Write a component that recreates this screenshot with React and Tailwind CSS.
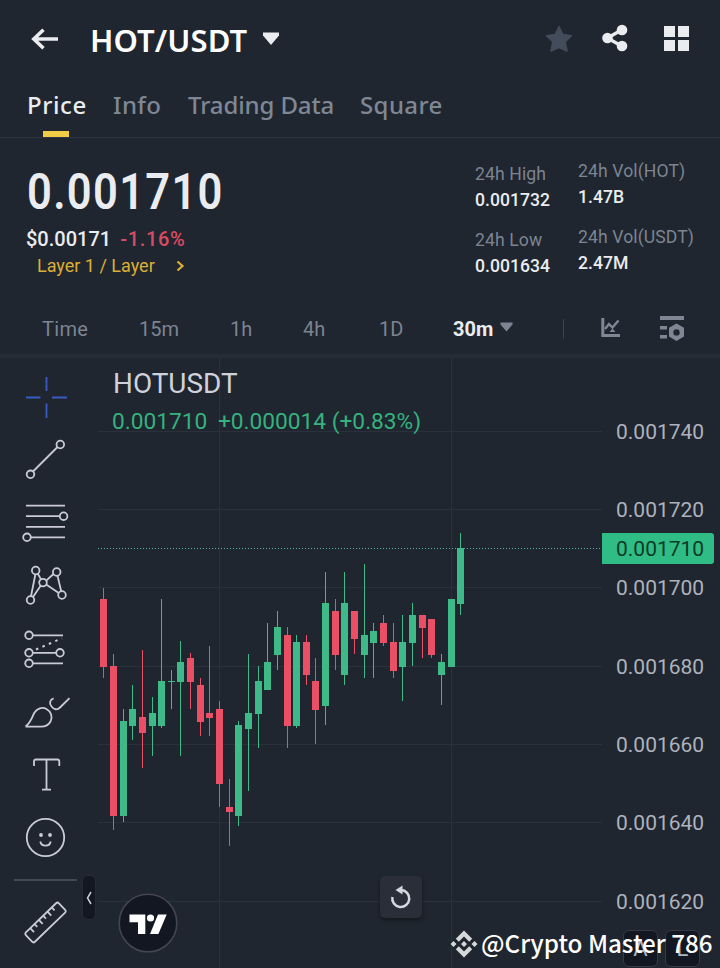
const GREEN = "#3dba87";
const RED = "#ea4f66";

// left edge, body top, body bottom, wick top, wick bottom, up
const candles = [
  [100, 599, 667, 588, 678, 0],
  [110, 666, 816, 654, 830, 0],
  [120, 721, 816, 709, 822, 1],
  [129, 709, 726, 685, 740, 1],
  [139, 717, 733, 650, 768, 0],
  [149, 713, 726, 697, 756, 1],
  [158, 681, 726, 599, 728, 1],
  [168, 681, 682, 670, 709, 1],
  [177, 662, 682, 641, 756, 1],
  [187, 658, 682, 653, 709, 0],
  [197, 685, 722, 678, 736, 0],
  [206, 713, 718, 646, 736, 0],
  [216, 709, 784, 701, 807, 0],
  [226, 807, 812, 779, 846, 0],
  [235, 725, 816, 721, 826, 1],
  [245, 713, 729, 654, 791, 1],
  [255, 681, 714, 666, 748, 1],
  [264, 662, 690, 623, 690, 1],
  [274, 627, 655, 611, 670, 1],
  [284, 635, 726, 627, 748, 0],
  [293, 642, 726, 635, 728, 1],
  [303, 642, 675, 635, 685, 0],
  [312, 681, 710, 658, 744, 0],
  [322, 603, 706, 572, 725, 1],
  [332, 611, 655, 599, 670, 0],
  [341, 603, 675, 572, 685, 1],
  [351, 611, 639, 611, 654, 0],
  [361, 635, 655, 564, 678, 1],
  [370, 631, 643, 623, 678, 1],
  [380, 623, 643, 615, 646, 0],
  [390, 642, 671, 623, 678, 0],
  [399, 642, 667, 615, 701, 1],
  [409, 615, 643, 603, 666, 1],
  [419, 615, 628, 615, 658, 0],
  [428, 619, 655, 619, 658, 0],
  [438, 662, 675, 654, 705, 1],
  [448, 599, 667, 599, 667, 1],
  [457, 548, 604, 533, 615, 1],
];

const levels = [
  ["0.001740", 431],
  ["0.001720", 509],
  ["0.001700", 587],
  ["0.001680", 666],
  ["0.001660", 744],
  ["0.001640", 822],
  ["0.001620", 901],
];

function Tool({ children, color = "#c9ccd6" }) {
  return (
    <svg width="92" height="63" viewBox="0 0 92 63" fill="none" stroke={color} strokeWidth="1.8" className="block shrink-0">
      {children}
    </svg>
  );
}

function Header() {
  return (
    <div className="h-[77px] flex items-center text-[#eaecef]">
      <svg width="28" height="22" viewBox="0 0 28 22" className="ml-[31px]" fill="none" stroke="currentColor" strokeWidth="3.6">
        <path d="M27 11H3M12.500 1.800L2.800 11L12.500 20.200" />
      </svg>
      <h1 className="ml-[31px] mt-[2px] w-[158px] text-[31px] leading-[40px] font-semibold tracking-[0.1px] text-white whitespace-nowrap">HOT/USDT</h1>
      <svg width="18" height="14" viewBox="0 0 18 14" className="ml-[14px]">
        <path d="M1 0.500H17V3.500L9 13L1 3.500Z" fill="currentColor" />
      </svg>

      <svg width="28" height="28" viewBox="0 0 28 28" className="ml-[265px] mt-[1px]">
        <path d="M14 1.500L17.800 9.500L26.500 10.700L20.200 16.800L22 26L14 22.500L6 26L7.800 16.800L1.500 10.700L10.200 9.500Z" fill="#434c5a" stroke="#434c5a" strokeWidth="1.500" strokeLinejoin="round" />
      </svg>
      <svg width="28" height="28" viewBox="0 0 28 28" className="ml-[28px] mb-[1px]" fill="currentColor">
        <path d="M6.500 14L20.500 6M6.500 14L20.500 22" stroke="currentColor" strokeWidth="3.200" />
        <circle cx="6.500" cy="14" r="5.300" />
        <circle cx="21" cy="6" r="5.300" />
        <circle cx="21" cy="22" r="5.300" />
      </svg>
      <div className="ml-[35px] grid grid-cols-2 gap-[3px]">
        <i className="w-[11px] h-[11px] bg-[#eaecef]" />
        <i className="w-[11px] h-[11px] bg-[#eaecef]" />
        <i className="w-[11px] h-[11px] bg-[#eaecef]" />
        <i className="w-[11px] h-[11px] bg-[#eaecef]" />
      </div>
    </div>
  );
}

function Tabs() {
  return (
    <div className="h-[61px] flex border-b border-[#303641] pl-[27px] text-[24px] leading-[30px] font-medium text-[#7f8795] whitespace-nowrap">
      <div className="w-[60px] mr-[26px] pt-[13px] text-[#eaecef] flex flex-col">
        <span className="tracking-[0.6px]">Price</span>
        <i className="mt-[11px] ml-[16px] w-[26px] h-[6px] bg-[#f0cd45] shrink-0" />
      </div>
      <span className="w-[75px] pt-[13px] tracking-[0.4px]">Info</span>
      <span className="w-[172px] pt-[13px] tracking-[-0.1px]">Trading Data</span>
      <span className="pt-[13px] tracking-[0.4px]">Square</span>
    </div>
  );
}

function Stat({ label, value }) {
  return (
    <div className="h-[66px] leading-[26px] text-[17.6px] whitespace-nowrap">
      <div className="tracking-[0.1px] text-[#7c8492]">{label}</div>
      <div className="font-medium text-[#eaecef]">{value}</div>
    </div>
  );
}

function Summary() {
  return (
    <div className="h-[168px] flex font-[Roboto,sans-serif]">
      <div className="w-[475px] pl-[26px] pt-[26px] whitespace-nowrap">
        <div className="origin-left scale-x-[0.87] text-[50px] leading-[56px] font-semibold tracking-[1.5px] ml-px text-[#eaecef]">0.001710</div>
        <div className="mt-[6px] text-[20px] leading-[26px] font-medium text-[#eaecef]">
          <span>$0.00171</span>
          <span className="ml-[9px] tracking-[0.7px] text-[#d84b62]">-1.16%</span>
        </div>
        <div className="ml-[11px] mt-[1px] flex items-center text-[18px] leading-[26px] text-[#dcae35]">
          <span className="w-[139px]">Layer 1 / Layer</span>
          <svg width="9" height="12" viewBox="0 0 9 12" fill="none" stroke="currentColor" strokeWidth="2.200">
            <path d="M1.500 1.500L6.500 6L1.500 10.500" />
          </svg>
        </div>
      </div>
      <div className="w-[103px] pt-[23px]">
        <Stat label="24h High" value="0.001732" />
        <Stat label="24h Low" value="0.001634" />
      </div>
      <div className="pt-[20px]">
        <Stat label="24h Vol(HOT)" value="1.47B" />
        <Stat label="24h Vol(USDT)" value="2.47M" />
      </div>
    </div>
  );
}

function Intervals() {
  return (
    <div className="h-[48px] flex items-center pb-[3px] pl-[42px] font-[Roboto,sans-serif] text-[20px] text-[#7c8492] whitespace-nowrap">
      <span className="w-[97px] tracking-[0.3px]">Time</span>
      <span className="w-[91px]">15m</span>
      <span className="w-[73px]">1h</span>
      <span className="w-[76px]">4h</span>
      <span className="w-[74px]">1D</span>
      <span className="w-[47px] font-bold text-[#eaecef]">30m</span>
      <svg width="13" height="10" viewBox="0 0 13 10" className="mb-[3px]">
        <path d="M0.500 0.500H12.500V2.500L6.500 9.500L0.500 2.500Z" fill="#7c8492" />
      </svg>
      <i className="ml-[50px] w-px h-[20px] bg-[#3a414d]" />
      <svg width="20" height="20" viewBox="0 0 20 20" className="ml-[37px] mb-[2px]" fill="none" stroke="#7f8795">
        <path d="M1.800 0V17.500H19" strokeWidth="3" />
        <path d="M4 11L8 6L11.500 9.500L17.500 2.500" strokeWidth="2.400" />
        <path d="M11.500 10.500L14.500 14H8.500Z" fill="#7f8795" stroke="none" />
      </svg>
      <svg width="25" height="26" viewBox="0 0 25 26" className="ml-[39px] mb-[2px]" fill="#7f8795">
        <path d="M0 1H24V5H0ZM0 11H7V14.500H0ZM0 20H7V23.500H0Z" />
        <path fillRule="evenodd" d="M16.500 8.500L24 12.800V21.500L16.500 26L9 21.500V12.800ZM16.500 14.200A3.200 3.200 0 1 0 16.500 20.600A3.200 3.200 0 1 0 16.500 14.200Z" />
      </svg>
    </div>
  );
}

function Toolbar() {
  return (
    <div className="w-[92px] pt-[8px] shrink-0">
      <Tool color="#3a5bc4">
        <path d="M26 31.500H40.500M52 31.500H67M46.500 11V25M46.500 37.500V52" />
      </Tool>
      <Tool>
        <path d="M33 42.500L57.500 18" />
        <circle cx="60.300" cy="15.500" r="3.800" />
        <circle cx="30.500" cy="45.300" r="3.800" />
      </Tool>
      <Tool>
        <path d="M26 13.600H65M26 24.200H59.800M26 34.900H65M30.800 45.300H65" />
        <circle cx="63.600" cy="24.200" r="3.800" />
        <circle cx="27" cy="45.300" r="3.800" />
      </Tool>
      <Tool>
        <path d="M35.400 19.300L31 41.200M37.800 18.700L41 24.400M46.200 25.600L53.500 19M57.500 20.800L61.200 36.200M46.200 29.600L58.800 38M40.800 30.600L33 42" />
        <circle cx="35.700" cy="15.500" r="3.800" />
        <circle cx="56.700" cy="17" r="3.800" />
        <circle cx="43" cy="27.600" r="3.800" />
        <circle cx="30.500" cy="45" r="3.800" />
        <circle cx="62" cy="40" r="3.800" />
      </Tool>
      <Tool>
        <path d="M32.800 17.300H63M32.800 34.800H56.200M32.800 45.300H63" />
        <path d="M36 31.500L62 20.300" strokeDasharray="2.500 4.500" strokeWidth="2" />
        <circle cx="29" cy="17.300" r="3.800" />
        <circle cx="29" cy="34.800" r="3.800" />
        <circle cx="60" cy="34.800" r="3.800" />
        <circle cx="29" cy="45.300" r="3.800" />
      </Tool>
      <Tool>
        <path d="M25.500 45.500C31 41.500 32 36 34.500 31.500C37 27.500 42 25.500 46.500 28C51 30.500 53 36 50.500 40.500C48.500 44.500 45 45.700 41 45.700H25.500" />
        <path d="M53.600 17.400C50 18.500 48.800 22.500 51.500 25.500C54 28.500 57 29.500 60 26.500L69.500 17.200" />
      </Tool>
      <Tool>
        <path d="M34 22V17.500Q34 15.500 36 15.500H57.300Q59.300 15.500 59.300 17.500V22M46.500 15.500V45.600M42 45.600H51" />
      </Tool>
      <Tool>
        <circle cx="45.500" cy="30.500" r="18.700" />
        <path d="M40.300 34.500Q41 38.600 45.500 38.600Q50 38.600 50.700 34.500" />
        <circle cx="41" cy="28" r="1.900" fill="#c9ccd6" stroke="none" />
        <circle cx="50" cy="28" r="1.900" fill="#c9ccd6" stroke="none" />
      </Tool>
      <i className="block ml-[14px] mt-[9px] w-[63px] h-[2px] bg-[#434955]" />
      <div className="mt-[10px]">
        <Tool>
          <g transform="translate(45.500 31.500) rotate(-44)">
            <rect x="-23" y="-6.500" width="46" height="13" rx="2" />
            <path d="M-15 -6.500V-1M-9 -6.500V-2.500M-3 -6.500V-1M3 -6.500V-2.500M9 -6.500V-1M15 -6.500V-2.500" />
          </g>
        </Tool>
      </div>
    </div>
  );
}

function Chart() {
  return (
    <svg width="628" height="610" viewBox="92 358 628 610" className="block shrink-0 font-[Roboto,sans-serif]">
      <g fill="#2a313b">
        <rect x="219" y="358" width="1" height="610" />
        <rect x="451" y="358" width="1" height="610" />
        {levels.map(([label, y]) => (
          <rect key={label} x="98" y={y} width="504" height="1" />
        ))}
      </g>
      <path d="M98 548.500H602" stroke="#5bb0a0" strokeDasharray="1 2" />
      {candles.map(([x, top, bottom, high, low, up]) => (
        <g key={x} fill={up ? GREEN : RED}>
          <rect x={x + 3} y={high} width="1" height={low - high} />
          <rect x={x} y={top} width="7" height={bottom - top} />
        </g>
      ))}
      <text x="113" y="393" fontSize="27.900" fill="#cfd2da">HOTUSDT</text>
      <text x="112" y="429" fontSize="22.700" fill="#35b27e">0.001710</text>
      <text x="218" y="429" fontSize="22.700" fill="#35b27e">+0.000014 (+0.83%)</text>
      {levels.map(([label, y]) => (
        <text key={label} x="616" y={y + 8} fontSize="21" fill="#aeb2bd">{label}</text>
      ))}
      <path d="M602 533H711Q714 533 714 536V561Q714 564 711 564H602Z" fill="#2fbd85" />
      <text x="616" y="556" fontSize="21" fill="#0c3a26">0.001710</text>
    </svg>
  );
}

function Overlays() {
  return (
    <>
      <div className="absolute left-[82px] top-[875px] w-[14px] h-[45px] rounded-[6px] bg-[#131722] border border-[#252a35] flex items-center justify-center">
        <svg width="6" height="14" viewBox="0 0 6 14" fill="none" stroke="#c9ccd6" strokeWidth="1.500">
          <path d="M5 1L1.500 7L5 13" />
        </svg>
      </div>
      <svg className="absolute left-[118px] top-[893px]" width="60" height="60" viewBox="118 893 60 60">
        <circle cx="148" cy="923" r="28.800" fill="#131722" stroke="#434651" strokeWidth="1.600" />
        <g fill="#fff">
          <path d="M129.500 914.500H145.300V934H138V922.300H129.500Z" />
          <circle cx="150.500" cy="918" r="3.600" />
          <path d="M158 914.500H166.700L158.400 934H150Z" />
        </g>
      </svg>
      <div className="absolute left-[380px] top-[876px] w-[42px] h-[42px] rounded-[5px] bg-[#2a2e39] shadow-[0_2px_4px_rgba(0,0,0,0.4)] flex items-center justify-center">
        <svg width="22" height="24" viewBox="0 0 22 24" fill="none" stroke="#d5d8e0" strokeWidth="2.500">
          <path d="M2.400 12A8.500 8.500 0 1 0 11 5" />
          <path d="M12.500 0.500V9.500L5.500 5Z" fill="#d5d8e0" stroke="none" />
        </svg>
      </div>
      <div className="absolute left-[623px] top-[930px] flex gap-[7px] font-[Roboto,sans-serif] text-[22px] text-[#b2b5be]">
        <span className="w-[35px] h-[37px] rounded-[6px] border border-[#363a45] bg-[#131722] flex items-center justify-center">A</span>
        <span className="w-[35px] h-[37px] rounded-[6px] border border-[#363a45] bg-[#131722] flex items-center justify-center">L</span>
      </div>
      <div className="absolute left-[450px] top-[925px] h-[36px] flex items-center whitespace-nowrap text-white">
        <svg width="28" height="28" viewBox="0 0 28 28" className="mt-[1px]" fill="#d6d7d9">
          <path d="M14 0.500L22.200 8.700L19.200 11.700L14 6.500L8.800 11.700L5.800 8.700Z" />
          <path d="M14 27.500L22.200 19.300L19.200 16.300L14 21.500L8.800 16.300L5.800 19.300Z" />
          <path d="M3.500 11L6.500 14L3.500 17L0.500 14ZM24.500 11L27.500 14L24.500 17L21.500 14ZM14 11L17 14L14 17L11 14Z" />
        </svg>
        <span className="ml-[3px] font-['Noto_Sans_CJK_SC',sans-serif] text-[24.2px] leading-[36px] font-medium">@Crypto Master 786</span>
      </div>
    </>
  );
}

export default function App() {
  return (
    <div className="relative w-[720px] h-[968px] overflow-hidden bg-[#1f262f] font-['Noto_Sans',sans-serif]">
      <Header />
      <Tabs />
      <Summary />
      <Intervals />
      <div className="h-[614px] flex border-t-[4px] border-[#262c37]">
        <Toolbar />
        <Chart />
      </div>
      <Overlays />
    </div>
  );
}
